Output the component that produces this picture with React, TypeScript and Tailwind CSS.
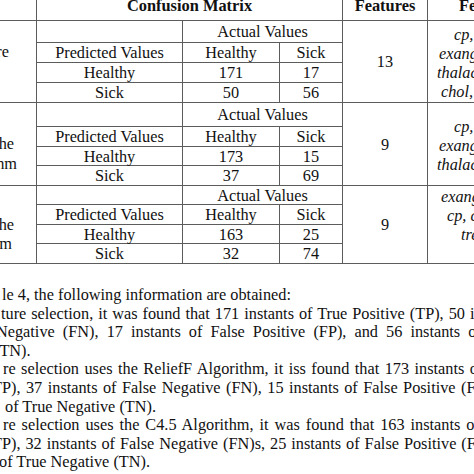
const groups = [
  {
    label: [
      { text: "Without Feature", pr: "pr-[27px]" },
      { text: "Selection", pr: "pr-[40px]" },
    ],
    count: "13",
    features: [
      { text: "cp, trestbps, age, sex,", pl: "pl-[26px]" },
      { text: "exang, oldpeak, slope,", pl: "pl-[11px]" },
      { text: "thalach, restecg, ca,", pl: "pl-[9px]" },
      { text: "chol, fbs, thal", pl: "pl-[13px]" },
    ],
    healthy: ["171", "17"],
    sick: ["50", "56"],
    featPad: "pt-[3px]",
  },
  {
    label: [
      { text: "Feature Selection", pr: "pr-[40px]" },
      { text: "using the", pr: "pr-[22px]" },
      { text: "ReliefF Algorithm", pr: "pr-[19px]" },
    ],
    count: "9",
    features: [
      { text: "cp, ca, thal, sex,", pl: "pl-[26px]" },
      { text: "exang, oldpeak,", pl: "pl-[11px]" },
      { text: "thalach, slope, age", pl: "pl-[9px]" },
    ],
    healthy: ["173", "15"],
    sick: ["37", "69"],
    featPad: "pt-[2px]",
  },
  {
    label: [
      { text: "Feature Selection", pr: "pr-[40px]" },
      { text: "using the", pr: "pr-[22px]" },
      { text: "C4.5 Algorithm", pr: "pr-[24px]" },
    ],
    count: "9",
    features: [
      { text: "exang, oldpeak,", pl: "pl-[13px]" },
      { text: "cp, ca, thal, sex,", pl: "pl-[19px]" },
      { text: "trestbps, chol,", pl: "pl-[33px]" },
      { text: "age", pl: "pl-[50px]" },
    ],
    healthy: ["163", "25"],
    sick: ["32", "74"],
    featPad: "pt-[0px]",
  },
];

const lines = [
  { text: "le 4, the following information are obtained:", cls: "ml-[2px]" },
  { text: "ture selection, it was found that 171 instants of True Positive (TP), 50 instants", cls: "ml-[1px] [word-spacing:0.9px]" },
  { text: "Negative (FN), 17 instants of False Positive (FP), and 56 instants of", cls: "-ml-[4px] [word-spacing:4px]" },
  { text: "(TN).", cls: "-ml-[6px]" },
  { text: "re selection uses the ReliefF Algorithm, it iss found that 173 instants of", cls: "ml-[3px] [word-spacing:1.4px]" },
  { text: "TP), 37 instants of False Negative (FN), 15 instants of False Positive (FP),", cls: "-ml-[8px] [word-spacing:1.4px]" },
  { text: "of True Negative (TN).", cls: "ml-[5px]" },
  { text: "re selection uses the C4.5 Algorithm, it was found that 163 instants of", cls: "ml-[3px] [word-spacing:1.9px]" },
  { text: "TP), 32 instants of False Negative (FN)s, 25 instants of False Positive (FP),", cls: "-ml-[8px] [word-spacing:0.9px]" },
  { text: "of True Negative (TN).", cls: "-ml-[1px]" },
];

const cell = "flex items-center justify-center border-r border-b border-[#5c5c5c]";

export default function App() {
  return (
    <div className="w-[474px] h-[474px] overflow-hidden bg-white text-[#111] font-['Liberation_Serif',serif] text-[16.3px]">
      {/* Tabla */}
      <div className="-mt-[9px] grid grid-cols-[37px_146px_97px_63px_85px_46px] grid-rows-[30px_22px_20px_20px_20px_24px_20px_19px_20px_19px_20px_19px_20px] leading-[19px]">
        <div className={cell} />
        <div className={`${cell} col-span-3 font-bold text-[16.4px]`}>Confusion Matrix</div>
        <div className={`${cell} font-bold text-[16.4px]`}>Features</div>
        <div className="flex items-center border-b border-[#5c5c5c] overflow-hidden">
          <span className="pl-[31px] whitespace-nowrap font-bold text-[16.4px]">Features Selected</span>
        </div>

        {groups.map((g, gi) => (
          <div key={gi} className="contents">
            <div className="row-span-4 flex flex-col justify-center items-end overflow-hidden border-r border-b border-[#5c5c5c] leading-[19.5px]">
              {g.label.map((l, i) => (
                <span key={i} className={`${l.pr} whitespace-nowrap`}>
                  {l.text}
                </span>
              ))}
            </div>
            <div className={cell} />
            <div className={`${cell} col-span-2`}>Actual Values</div>
            <div className={`${cell} row-span-4`}>{g.count}</div>
            <div className={`${g.featPad} row-span-4 flex flex-col justify-center items-start overflow-hidden border-b border-[#5c5c5c] italic leading-[19px]`}>
              {g.features.map((f, i) => (
                <span key={i} className={`${f.pl} whitespace-nowrap`}>
                  {f.text}
                </span>
              ))}
            </div>

            <div className={cell}>Predicted Values</div>
            <div className={cell}>Healthy</div>
            <div className={cell}>Sick</div>

            <div className={cell}>Healthy</div>
            <div className={cell}>{g.healthy[0]}</div>
            <div className={cell}>{g.healthy[1]}</div>

            <div className={cell}>Sick</div>
            <div className={cell}>{g.sick[0]}</div>
            <div className={cell}>{g.sick[1]}</div>
          </div>
        ))}
      </div>

      {/* Texto */}
      <div className="mt-[22px] leading-[18.6px] overflow-hidden">
        {lines.map((l, i) => (
          <div key={i} className={`${l.cls} whitespace-nowrap`}>
            {l.text}
          </div>
        ))}
      </div>
    </div>
  );
}
